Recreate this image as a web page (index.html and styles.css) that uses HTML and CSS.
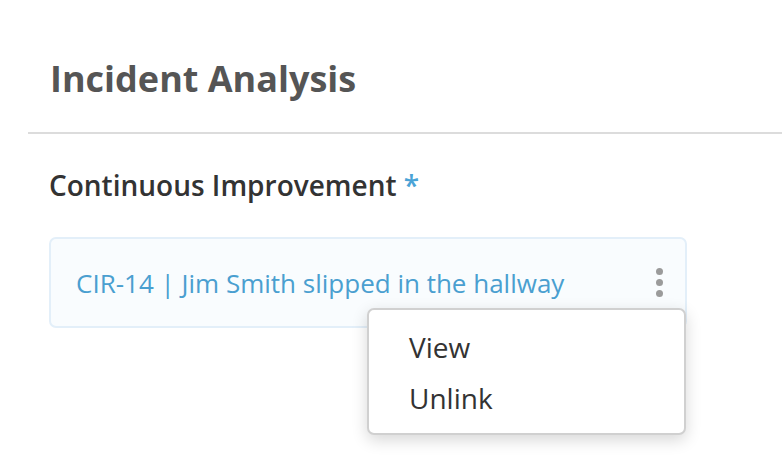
FILE: index.html
```html
<!DOCTYPE html>
<html>
<head>
<meta charset="utf-8">
<link rel="stylesheet" href="styles.css">
</head>
<body>
<div class="page">
  <div class="header">
    <h1 class="title">Incident Analysis</h1>
  </div>
  <div class="section">
    <div class="label">Continuous Improvement <span class="req">*</span></div>
    <div class="card">
      <a class="link">CIR-14 | Jim Smith slipped in the hallway</a>
      <div class="kebab"><span></span><span></span><span></span></div>
      <div class="menu">
        <div class="item">View</div>
        <div class="item">Unlink</div>
      </div>
    </div>
  </div>
</div>
</body>
</html>
```
FILE: styles.css
```css
html, body { margin: 0; padding: 0; background: #fff; }
body { font-family: "Open Sans", "Liberation Sans", sans-serif; width: 782px; height: 464px; overflow: hidden; }
.page { padding-left: 28px; }
.header { border-bottom: 2px solid #dcdcdc; padding: 55px 22px 0; height: 134px; box-sizing: border-box; }
.title { margin: 0; font-size: 36px; font-weight: 700; color: #555; line-height: 48px; }
.section { padding: 32px 0 0 21px; }
.label { font-size: 28px; font-weight: 600; color: #333; line-height: 38px; }
.req { color: #4aa3d6; }
.card { position: relative; margin-top: 33px; width: 638px; height: 91px; box-sizing: border-box; border: 2px solid #e3eff9; border-radius: 7px; background: #f9fcfe; display: flex; align-items: center; justify-content: space-between; padding: 0 22px 0 25px; }
.link { font-size: 26px; color: #4a9fd0; }
.kebab { display: flex; flex-direction: column; gap: 4px; }
.kebab span { width: 7px; height: 7px; border-radius: 50%; background: #9b9b9b; }
.menu { position: absolute; left: 316px; top: 69px; width: 319px; height: 127px; box-sizing: border-box; background: #fff; border: 2px solid #d0d0d0; border-radius: 7px; box-shadow: 0 5px 16px rgba(0,0,0,0.16); padding: 12px 0 0 40px; }
.item { font-size: 28px; color: #333; line-height: 51px; }
```
